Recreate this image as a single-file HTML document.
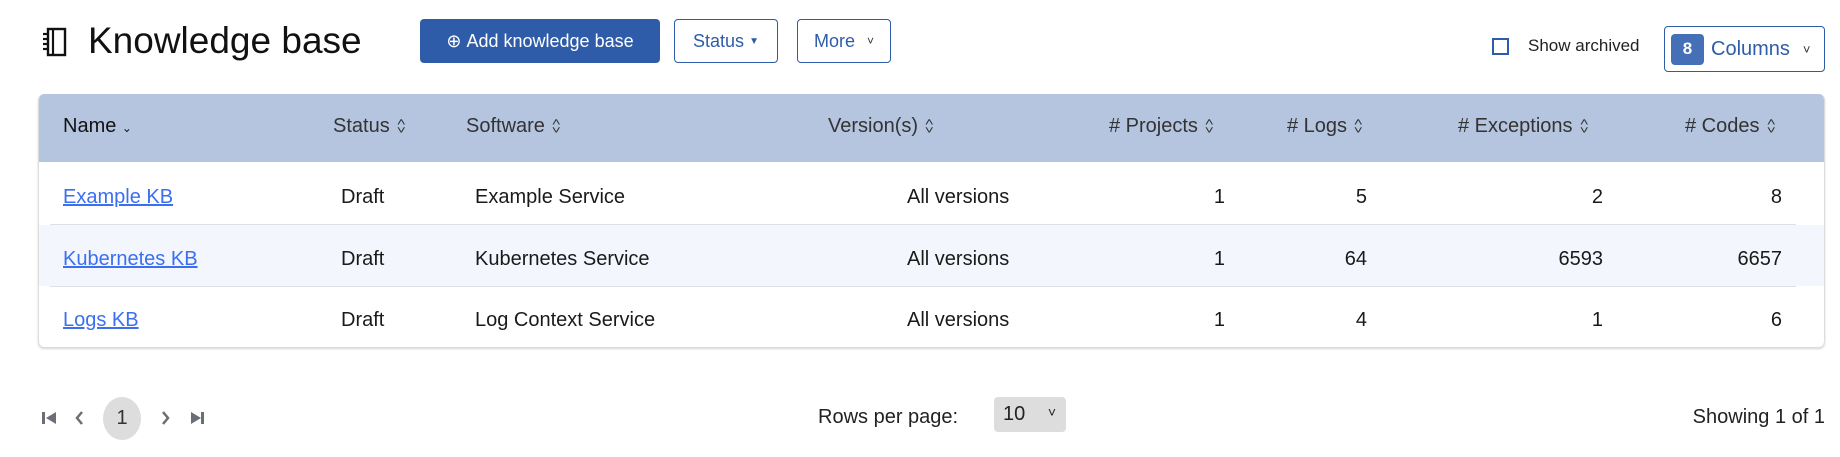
<!DOCTYPE html>
<html><head><meta charset="utf-8"><style>
*{box-sizing:border-box;margin:0;padding:0}
body{width:1840px;height:457px;background:#fff;font-family:"Liberation Sans",sans-serif;color:#222;position:relative;overflow:hidden}
.a{position:absolute;white-space:nowrap}
.btn{position:absolute;border:1px solid #2f5ca8;border-radius:4px;color:#2f5ca8;font-size:18px;display:flex;align-items:center;justify-content:center;background:#fff}
.card{position:absolute;left:38px;top:94px;width:1787px;height:253px;border-radius:6px;border-left:1px solid #ddd;border-right:1px solid #ddd;box-shadow:0 2px 2px #d6d6d6;overflow:hidden}
.hd{position:absolute;left:0;top:0;width:100%;height:68px;background:#b5c5df}
.th{position:absolute;top:21px;font-size:20px;color:#333}
.td{position:absolute;font-size:20px;color:#1a1a1a}
.r{text-align:right}
.lk{color:#3b6ff0;text-decoration:underline}
.sep{position:absolute;left:11px;width:1746px;height:1px;background:#dde2ea}
.sort{display:inline-block;font-size:11px;line-height:8px;vertical-align:middle;margin-left:8px;color:#333;text-align:center;transform:scaleX(1.4)}
</style></head><body>
<svg class="a" style="left:41px;top:27px" width="26" height="30" viewBox="0 0 26 30"><rect x="7" y="2" width="17" height="26" fill="none" stroke="#111" stroke-width="2.4"/><line x1="12" y1="2" x2="12" y2="28" stroke="#111" stroke-width="2.2"/><g stroke="#111" stroke-width="2.2"><line x1="2" y1="7" x2="7" y2="7"/><line x1="2" y1="12" x2="7" y2="12"/><line x1="2" y1="17" x2="7" y2="17"/><line x1="2" y1="22" x2="7" y2="22"/></g></svg>
<div class="a" style="left:88px;top:20px;font-size:37px;color:#111">Knowledge base</div>
<div class="btn" style="left:420px;top:19px;width:240px;height:44px;background:#2f5ca8;color:#fff">⊕&nbsp;Add knowledge base</div>
<div class="btn" style="left:674px;top:19px;width:104px;height:44px">Status <span style="font-size:10px;margin-left:5px">▼</span></div>
<div class="btn" style="left:797px;top:19px;width:94px;height:44px">More <span style="font-size:12px;margin-left:12px;color:#333">˅</span></div>
<div class="a" style="left:1492px;top:38px;width:17px;height:17px;border:2px solid #2f5ca8"></div>
<div class="a" style="left:1528px;top:36px;font-size:17px;color:#222">Show archived</div>
<div class="btn" style="left:1664px;top:26px;width:161px;height:46px;justify-content:flex-start">
<span style="background:#4570b8;color:#fff;border-radius:4px;width:33px;height:31px;margin-left:6px;display:flex;align-items:center;justify-content:center;font-weight:bold;font-size:17px">8</span><span style="margin-left:7px;font-size:20px">Columns</span><span style="margin-left:13px;font-size:13px;color:#333">˅</span></div>
<div class="card">
<div class="hd"></div>
<div class="th" style="left:24px;color:#111">Name <span style="font-size:12px">⌄</span></div>
<div class="th" style="left:294px">Status<span class="sort">˄<br>˅</span></div>
<div class="th" style="left:427px">Software<span class="sort">˄<br>˅</span></div>
<div class="th" style="left:789px">Version(s)<span class="sort">˄<br>˅</span></div>
<div class="th" style="left:1070px">#&nbsp;Projects<span class="sort">˄<br>˅</span></div>
<div class="th" style="left:1248px">#&nbsp;Logs<span class="sort">˄<br>˅</span></div>
<div class="th" style="left:1419px">#&nbsp;Exceptions<span class="sort">˄<br>˅</span></div>
<div class="th" style="left:1646px">#&nbsp;Codes<span class="sort">˄<br>˅</span></div>
<div class="a" style="left:0;top:131px;width:100%;height:61px;background:#f3f7fd"></div>
<div class="sep" style="top:130px"></div>
<div class="sep" style="top:192px"></div>

<div class="td lk" style="left:24px;top:92px">Example KB</div>
<div class="td" style="left:302px;top:92px">Draft</div>
<div class="td" style="left:436px;top:92px">Example Service</div>
<div class="td" style="left:868px;top:92px">All versions</div>
<div class="td r" style="left:1086px;width:100px;top:92px">1</div>
<div class="td r" style="left:1228px;width:100px;top:92px">5</div>
<div class="td r" style="left:1464px;width:100px;top:92px">2</div>
<div class="td r" style="left:1643px;width:100px;top:92px">8</div>

<div class="td lk" style="left:24px;top:154px">Kubernetes KB</div>
<div class="td" style="left:302px;top:154px">Draft</div>
<div class="td" style="left:436px;top:154px">Kubernetes Service</div>
<div class="td" style="left:868px;top:154px">All versions</div>
<div class="td r" style="left:1086px;width:100px;top:154px">1</div>
<div class="td r" style="left:1228px;width:100px;top:154px">64</div>
<div class="td r" style="left:1464px;width:100px;top:154px">6593</div>
<div class="td r" style="left:1643px;width:100px;top:154px">6657</div>

<div class="td lk" style="left:24px;top:215px">Logs KB</div>
<div class="td" style="left:302px;top:215px">Draft</div>
<div class="td" style="left:436px;top:215px">Log Context Service</div>
<div class="td" style="left:868px;top:215px">All versions</div>
<div class="td r" style="left:1086px;width:100px;top:215px">1</div>
<div class="td r" style="left:1228px;width:100px;top:215px">4</div>
<div class="td r" style="left:1464px;width:100px;top:215px">1</div>
<div class="td r" style="left:1643px;width:100px;top:215px">6</div>
</div>
<svg class="a" style="left:41px;top:410px" width="170" height="16" viewBox="0 0 170 16"><g fill="#6b6f75"><rect x="1" y="2" width="3" height="12"/><path d="M15 2 L5 8 L15 14Z"/><path d="M41 2 L36 8 L41 14" fill="none" stroke="#6b6f75" stroke-width="2.5"/><path d="M122 2 L127 8 L122 14" fill="none" stroke="#6b6f75" stroke-width="2.5"/><path d="M150 2 L160 8 L150 14Z"/><rect x="160" y="2" width="3" height="12"/></g></svg>
<div class="a" style="left:103px;top:397px;width:38px;height:43px;border-radius:50%;background:#ddd;font-size:20px;display:flex;align-items:center;justify-content:center;color:#333">1</div>
<div class="a" style="left:818px;top:406px;font-size:20px;color:#222">Rows per page:</div>
<div class="a" style="left:994px;top:397px;width:72px;height:35px;background:#ddd;border-radius:4px;font-size:20px;padding:6px 0 0 9px;color:#222">10<span style="position:absolute;right:10px;top:7px;font-size:14px">˅</span></div>
<div class="a" style="right:15px;top:406px;font-size:20px;color:#222">Showing 1 of 1</div>
</body></html>
